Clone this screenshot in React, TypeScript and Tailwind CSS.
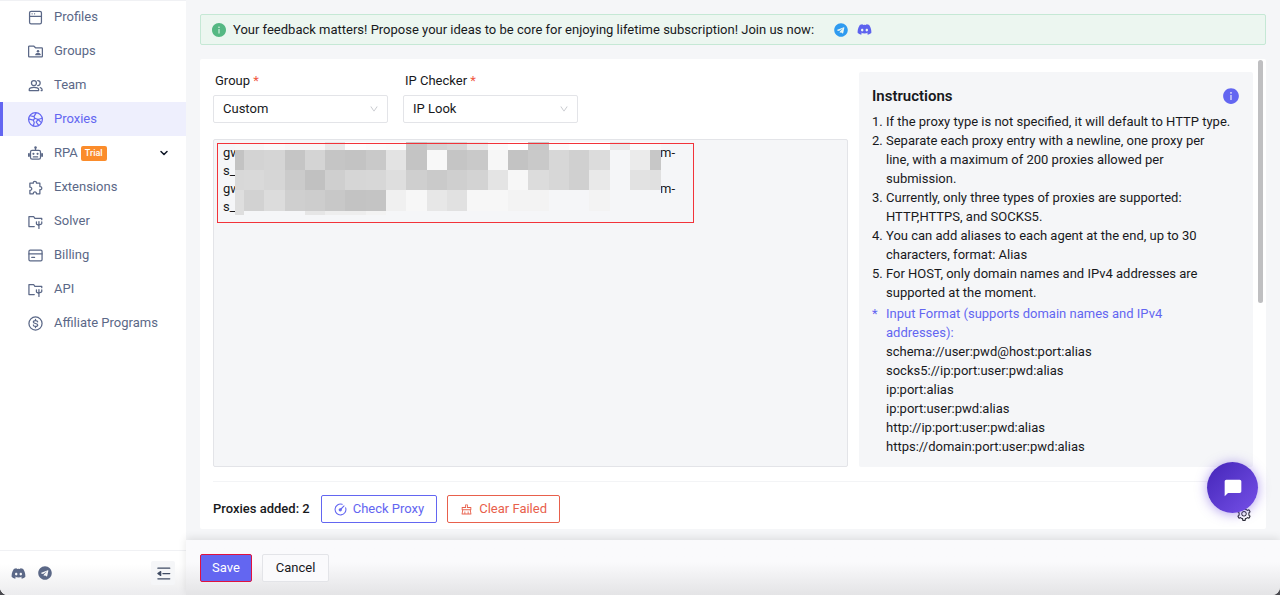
import type { ComponentType, ReactNode } from 'react';
import {
  AiFillInfoCircle,
  AiOutlineClear,
  AiOutlineDown,
  AiOutlineSetting,
} from 'react-icons/ai';
import { FaDiscord, FaTelegram } from 'react-icons/fa';
import { MdChatBubble } from 'react-icons/md';
import { ChevronDown } from 'lucide-react';

type IconProps = { className?: string };

function Stroke({ className, children }: IconProps & { children: ReactNode }) {
  return (
    <svg
      viewBox="0 0 24 24"
      fill="none"
      stroke="currentColor"
      strokeWidth="2"
      strokeLinecap="round"
      strokeLinejoin="round"
      className={className}
      aria-hidden="true"
    >
      {children}
    </svg>
  );
}

const ProfilesIcon = (props: IconProps) => (
  <Stroke {...props}>
    <rect x="2.5" y="2" width="19" height="20" rx="2.5" />
    <path d="M2.5 10h19M6.5 6h.1M10.5 6h.1" />
  </Stroke>
);

const GroupsIcon = (props: IconProps) => (
  <Stroke {...props}>
    <path d="M1 4v15.500a1 1 0 0 0 1 1h20a1 1 0 0 0 1-1V7a1 1 0 0 0-1-1H12L9.500 3.500H2a1 1 0 0 0-1 .5z" />
    <circle cx="16" cy="11.500" r="2" fill="currentColor" stroke="none" />
    <path d="M12.500 17c.5-2 6.500-2 7 0z" fill="currentColor" />
  </Stroke>
);

const TeamIcon = (props: IconProps) => (
  <Stroke {...props}>
    <circle cx="9.500" cy="8" r="4" />
    <path d="M2 20v-1.500C2 16 5.500 15 9.500 15s7.500 1 7.500 3.500V20zM15.500 4a4 4 0 0 1 0 8M19.500 15.500c2 .5 3 1.500 3 3V20H21" />
  </Stroke>
);

const ProxiesIcon = (props: IconProps) => (
  <Stroke {...props}>
    <circle cx="12" cy="12" r="11" />
    <path d="M3.500 6l6 1.500L11 10l-2.500 3L2 11.500M9.500 7.500L13 1.500M11 10l5 2 6.500-2M16 12l-3 4 4 5.500M16 12l5.500 5M8.500 13L10 17l-1.500 5" />
  </Stroke>
);

const RobotIcon = (props: IconProps) => (
  <Stroke {...props}>
    <rect x="4" y="7" width="16" height="14" rx="2.500" />
    <path d="M12 3v4M8.500 17.500h7" />
    <path d="M1.500 12.500v3.500M22.500 12.500v3.500" strokeWidth="3" />
    <circle cx="12" cy="2.500" r="2" fill="currentColor" stroke="none" />
    <circle cx="8.700" cy="12.500" r="1.700" fill="currentColor" stroke="none" />
    <circle cx="15.300" cy="12.500" r="1.700" fill="currentColor" stroke="none" />
  </Stroke>
);

const PuzzleIcon = (props: IconProps) => (
  <Stroke {...props}>
    <path d="M3 5h5.500c-.8-4 5.800-4 5 0H19v5.500c4-.8 4 5.800 0 5V22h-5.500c.5-4-5.500-4-5 0H3v-5.500c4 .5 4-5.500 0-5z" />
  </Stroke>
);

const FolderApiIcon = (props: IconProps) => (
  <Stroke {...props}>
    <path d="M10 20H1.500V4H9l2 3h11v2" />
    <path d="M17.500 12v11M13.500 12.500v3c0 2 4 1 4 4M22 12.500v2.500c0 2-4.500 1-4.500 3.500" />
  </Stroke>
);

const BillingIcon = (props: IconProps) => (
  <Stroke {...props}>
    <rect x="1.500" y="3.500" width="21" height="17" rx="2" />
    <path d="M1.500 9.500h21M6 15h4.500" />
  </Stroke>
);

const DollarIcon = (props: IconProps) => (
  <Stroke {...props}>
    <circle cx="12" cy="12" r="10.500" />
    <path d="M15.500 9.500C15.300 8 14 7.300 12 7.300S8.500 8 8.500 9.700c0 3.200 7 1.400 7 4.600 0 1.700-1.500 2.400-3.500 2.400s-3.400-.8-3.500-2.300M12 5.500v1.800M12 16.700v1.800" />
  </Stroke>
);

const CollapseIcon = (props: IconProps) => (
  <Stroke {...props}>
    <path d="M3 3.500h19M11 12h11M3 20.500h19" />
    <path d="M7.500 9v6L3 12z" fill="currentColor" />
  </Stroke>
);

const GaugeIcon = (props: IconProps) => (
  <Stroke {...props}>
    <path d="M15 2.500a10 10 0 1 0 6.500 6.500M12 12l6.500-6.500" />
    <circle cx="11.500" cy="12.500" r="2" fill="currentColor" />
  </Stroke>
);

type NavItem = {
  label: string;
  icon: ComponentType<IconProps>;
  active?: boolean;
  trial?: boolean;
};

const navItems: NavItem[] = [
  { label: 'Profiles', icon: ProfilesIcon },
  { label: 'Groups', icon: GroupsIcon },
  { label: 'Team', icon: TeamIcon },
  { label: 'Proxies', icon: ProxiesIcon, active: true },
  { label: 'RPA', icon: RobotIcon, trial: true },
  { label: 'Extensions', icon: PuzzleIcon },
  { label: 'Solver', icon: FolderApiIcon },
  { label: 'Billing', icon: BillingIcon },
  { label: 'API', icon: FolderApiIcon },
  { label: 'Affiliate Programs', icon: DollarIcon },
];

const instructions = [
  'If the proxy type is not specified, it will default to HTTP type.',
  'Separate each proxy entry with a newline, one proxy per\nline, with a maximum of 200 proxies allowed per\nsubmission.',
  'Currently, only three types of proxies are supported: HTTP,HTTPS, and SOCKS5.',
  'You can add aliases to each agent at the end, up to 30 characters, format: Alias',
  'For HOST, only domain names and IPv4 addresses are supported at the moment.',
];

const formats = [
  'schema://user:pwd@host:port:alias',
  'socks5://ip:port:user:pwd:alias',
  'ip:port:alias',
  'ip:port:user:pwd:alias',
  'http://ip:port:user:pwd:alias',
  'https://domain:port:user:pwd:alias',
];

// Pixelated cover over the proxy credentials: one grey level (hex pair) per cell.
const mosaicX = [0, 9, 29, 50, 70, 90, 110, 131, 151, 171, 192, 212, 232, 253, 273, 293, 314, 334, 354, 375, 395, 415, 426];
const mosaicY = [0, 8, 28, 48, 69, 73];
const mosaic = [
  'f7 f7 fa f7 f7 e8 fd fb fa c6 d2 d6 e9 fa ff c8 fb ff ff e9 fc f9',
  'c3 d3 d5 c5 d4 c5 c3 c9 e3 c4 f8 c5 c9 f7 c3 c9 d7 d0 dc f6 eb c7',
  'd8 d9 d6 cb c1 cf d6 d7 de cf ca cf d3 e4 f7 dc d7 d0 e9 f6 e2 e0',
  'de d2 dc cf cd c8 c3 c4 f0 f7 e7 e1 f7 f7 f3 f3 f6 f6 f3 f6 f6 f6',
  'de f6 f6 f6 e6 ee ee f3 f6 f6 f6 f6 f6 f6 f6 f6 f6 f6 f6 f6 f6 f6',
].map((row) => row.split(' '));

function Mosaic({ className }: IconProps) {
  return (
    <svg viewBox="0 0 426 73" className={className} shapeRendering="crispEdges" aria-hidden="true">
      {mosaic.map((row, r) =>
        row.map((level, c) => (
          <rect
            key={`${r}-${c}`}
            x={mosaicX[c]}
            y={mosaicY[r]}
            width={mosaicX[c + 1] - mosaicX[c]}
            height={mosaicY[r + 1] - mosaicY[r]}
            fill={level === 'f6' ? '#f5f6f8' : `#${level}${level}${level}`}
          />
        )),
      )}
    </svg>
  );
}

function Sidebar() {
  return (
    <aside className="flex w-[186px] shrink-0 flex-col bg-white shadow-[inset_0_1px_0_#f0f1f4]">
      <nav className="flex-1 text-[#5b6887]">
        {navItems.map(({ label, icon: Icon, active, trial }) => (
          <a
            key={label}
            href="#"
            className={
              active
                ? 'flex h-[34px] items-center border-l-3 border-[#6366f1] bg-[#eeeffd] pr-4 pl-[25px] text-[#6366f1]'
                : 'flex h-[34px] items-center pr-4 pl-7'
            }
          >
            <Icon className="mr-[11px] size-[15px] shrink-0" />
            {label}
            {trial && (
              <>
                <span className="ml-[3px] rounded-xs bg-[#fb8c2b] px-1 text-[9px] leading-[15px] font-medium text-white">
                  Trial
                </span>
                <ChevronDown className="ml-auto size-3 text-gray-900" strokeWidth={3} />
              </>
            )}
          </a>
        ))}
      </nav>
      <div className="flex h-[45px] items-center gap-3 border-t border-[#f0f1f4] bg-linear-to-b from-white from-30% to-[#ececee] px-[11px] text-[#5b6887]">
        <a href="#" aria-label="Discord">
          <FaDiscord className="size-[15px]" />
        </a>
        <a href="#" aria-label="Telegram">
          <FaTelegram className="size-[14px]" />
        </a>
        <button
          type="button"
          aria-label="Collapse sidebar"
          className="ml-auto flex size-6 items-center justify-center rounded-xs bg-[#f5f6f8] text-[#3f4b63]"
        >
          <CollapseIcon className="size-[15px]" />
        </button>
      </div>
    </aside>
  );
}

function SelectField({ id, label, value }: { id: string; label: string; value: string }) {
  return (
    <div className="w-[175px]">
      <label htmlFor={id} className="block px-0.5 leading-[18px]">
        {label} <span className="text-[#f0563f]">*</span>
      </label>
      <div className="relative mt-[5px]">
        <select
          id={id}
          className="block h-7 w-full appearance-none rounded-xs border border-[#e3e4e8] bg-white px-[9px]"
        >
          <option>{value}</option>
        </select>
        <AiOutlineDown className="pointer-events-none absolute top-[9px] right-[9px] size-[10px] text-[#bfc1c7]" />
      </div>
    </div>
  );
}

function Instructions() {
  return (
    <section className="w-[394px] shrink-0 rounded-xs bg-[#f5f6f8] px-[13px] pt-[14px] pb-[11px]">
      <div className="flex items-center justify-between">
        <h2 className="text-[15px] leading-5 font-semibold">Instructions</h2>
        <AiFillInfoCircle className="size-[18px] text-[#6366f1]" />
      </div>
      <ol className="mt-1.5 list-decimal pl-[14px] leading-[19px] whitespace-pre-line">
        {instructions.map((item) => (
          <li key={item}>{item}</li>
        ))}
      </ol>
      <div className="mt-0.5 flex leading-[19px]">
        <span className="w-[14px] shrink-0 text-[#6366f1]">*</span>
        <div>
          <p className="pr-14 text-[#6366f1]">Input Format (supports domain names and IPv4 addresses):</p>
          {formats.map((format) => (
            <p key={format}>{format}</p>
          ))}
        </div>
      </div>
    </section>
  );
}

export default function App() {
  return (
    <div className="min-h-screen bg-[#4b4b50]">
      <div className="relative flex min-h-screen overflow-hidden rounded-b-lg bg-[#f5f6f8] font-['Roboto','Open_Sans',sans-serif] text-[13px] text-[#18191c]">
        <Sidebar />
        <div className="flex min-w-0 flex-1 flex-col">
          <main className="flex flex-1 flex-col gap-[14px] px-[14px] pt-[14px] pb-[11px]">
            <div className="flex h-[31px] items-center rounded-xs border border-[#c5e8d5] bg-[#ecf6f0] px-[10px]">
              <AiFillInfoCircle className="mr-[6px] size-4 text-[#55b883]" />
              <p>
                Your feedback matters! Propose your ideas to be core for enjoying lifetime subscription! Join us now:
              </p>
              <a href="#" aria-label="Telegram" className="ml-5">
                <FaTelegram className="size-[14px] text-[#2f9bf0]" />
              </a>
              <a href="#" aria-label="Discord" className="ml-[9px]">
                <FaDiscord className="size-[15px] text-[#5d63ee]" />
              </a>
            </div>

            <div className="relative flex flex-1 flex-col rounded-xs bg-white px-[13px] pt-[13px]">
              <div className="absolute top-px right-[3px] h-[243px] w-[5px] rounded-full bg-[#bfbfc1]" />
              <div className="flex flex-1 gap-[11px]">
                <form className="flex min-w-0 flex-1 flex-col">
                  <div className="flex gap-[15px]">
                    <SelectField id="group" label="Group" value="Custom" />
                    <SelectField id="checker" label="IP Checker" value="IP Look" />
                  </div>
                  <div className="relative mt-4 flex flex-1">
                    <textarea
                      aria-label="Proxies"
                      spellCheck={false}
                      defaultValue={'gw\tm-\ns_\ngw\tm-\ns_'}
                      className="min-h-[200px] w-full resize-none rounded-xs border border-[#e3e4e8] bg-[#f5f6f8] px-[9px] py-1 leading-[18px] [tab-size:437px]"
                    />
                    <Mosaic className="pointer-events-none absolute top-[3px] left-[22px] h-[73px] w-[426px]" />
                    <div className="pointer-events-none absolute top-1 left-1 h-20 w-[477px] border border-[#f2333a]" />
                  </div>
                </form>
                <Instructions />
              </div>

              <div className="mt-[14px] flex items-center border-t border-[#f3f4f6] pt-[13px] pb-[6px]">
                <span className="mr-[11px] font-medium">Proxies added: 2</span>
                <button
                  type="button"
                  className="mr-[10px] flex h-7 items-center gap-[6px] rounded-xs border border-[#6366f1] px-3 text-[#6366f1]"
                >
                  <GaugeIcon className="size-[13px]" />
                  Check Proxy
                </button>
                <button
                  type="button"
                  className="flex h-7 items-center gap-[6px] rounded-xs border border-[#e8604c] px-3 text-[#e8604c]"
                >
                  <AiOutlineClear className="size-[13px]" />
                  Clear Failed
                </button>
              </div>
            </div>
          </main>

          <footer className="flex h-[55px] items-center gap-[10px] bg-linear-to-b from-[#fafafc] from-40% to-[#e4e4e6] px-[14px] shadow-[0_-2px_8px_rgba(0,0,0,0.1)]">
            <button type="button" className="h-7 rounded-xs border border-[#e0123f] bg-[#6366f1] px-[11px] text-white">
              Save
            </button>
            <button type="button" className="h-7 rounded-xs border border-[#e3e4e8] bg-[#fafafc] px-[13px]">
              Cancel
            </button>
          </footer>
        </div>

        <AiOutlineSetting className="absolute right-7 bottom-[73px] size-4 text-[#2b2c33]" />
        <button
          type="button"
          aria-label="Open chat"
          className="absolute right-[22px] bottom-[82px] flex size-[51px] items-center justify-center rounded-full bg-linear-to-br from-[#4524b8] to-[#7650e8] text-white shadow-[0_1px_12px_rgba(98,60,220,0.5)]"
        >
          <MdChatBubble className="size-5" />
        </button>
      </div>
    </div>
  );
}
